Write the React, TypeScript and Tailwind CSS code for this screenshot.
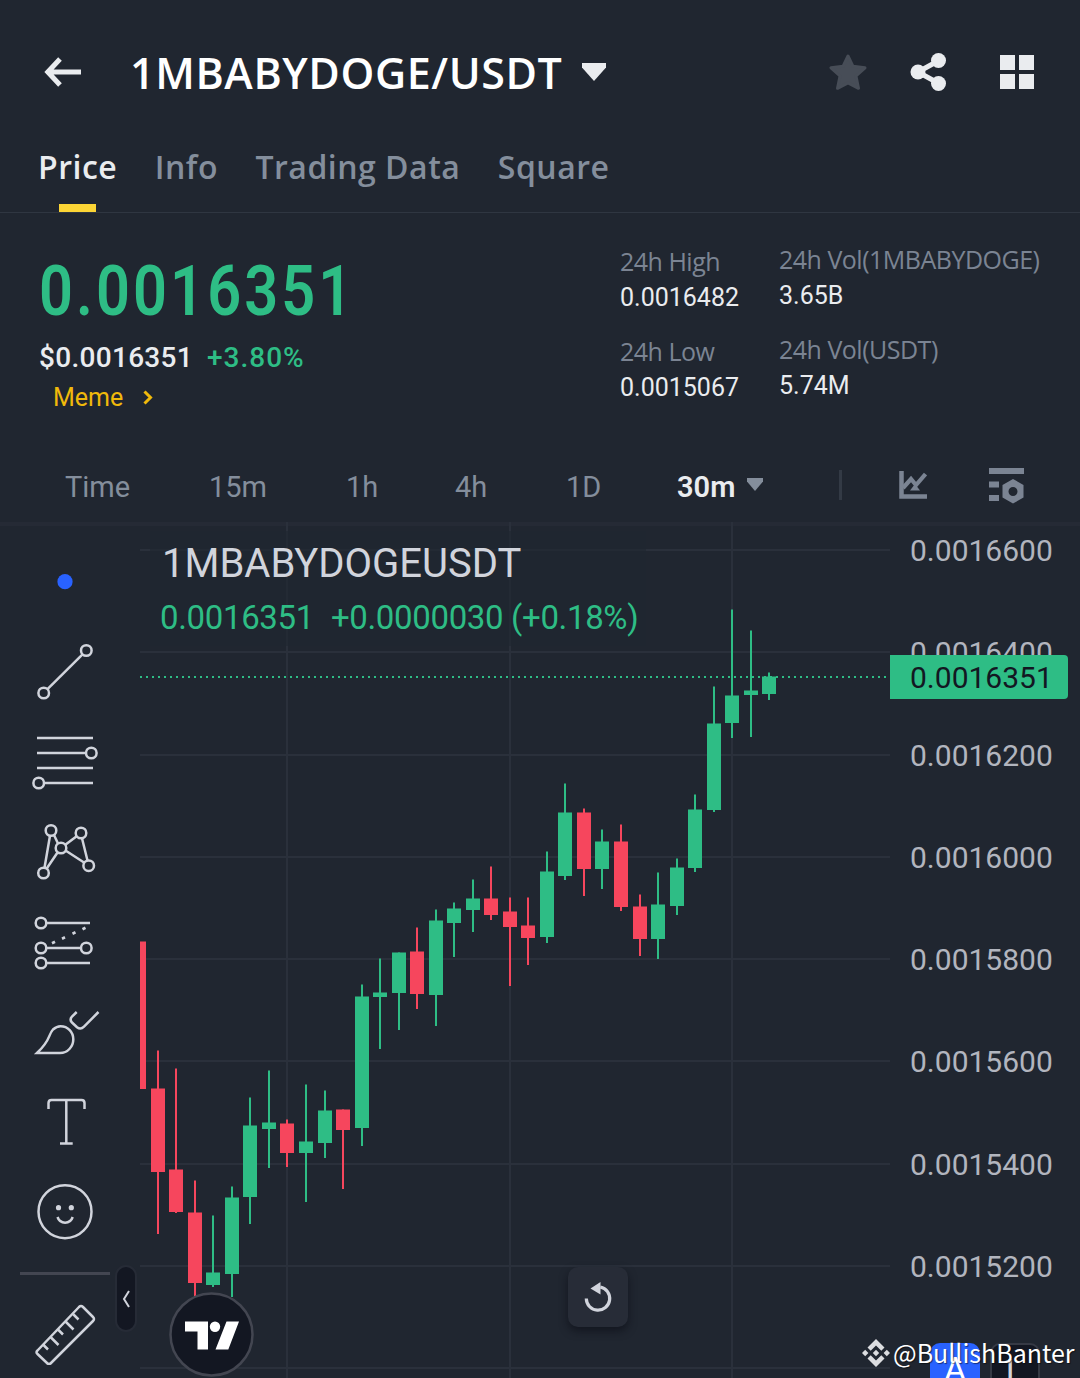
import type { ReactNode } from 'react'

const UP = '#2ebd85'
const DOWN = '#f6465d'

// [left, bodyTop, bodyBottom, wickTop, wickBottom, up], in chart pixels
type Candle = [number, number, number, number, number, boolean]

const candles: Candle[] = [
  [-8, 415.5, 563, 415.5, 563, false],
  [11, 562.5, 646, 524.5, 708, false],
  [29, 643.5, 686, 542.5, 687, false],
  [48, 686.5, 757, 654.5, 775, false],
  [66, 746.5, 759, 689.5, 761, true],
  [85, 671.5, 748, 660.5, 771, true],
  [103, 599.5, 671, 571.5, 698, true],
  [122, 596.5, 603, 544.5, 642, true],
  [140, 597.5, 627, 593.5, 641, false],
  [159, 615.5, 627, 558.5, 676, true],
  [178, 584.5, 617, 564.5, 632, true],
  [196, 583.5, 604, 583.5, 663, false],
  [215, 470.5, 602, 458.5, 620, true],
  [233, 466.5, 471, 432.5, 523, true],
  [252, 426.5, 467, 426.5, 504, true],
  [270, 425.5, 468, 401.5, 483, false],
  [289, 394.5, 469, 383.5, 500, true],
  [307, 382.5, 397, 376.5, 431, true],
  [326, 372.5, 384, 353.5, 406, true],
  [344, 372.5, 389, 340.5, 394, false],
  [363, 385.5, 401, 371.5, 460, false],
  [381, 399.5, 412, 371.5, 439, false],
  [400, 345.5, 411, 325.5, 417, true],
  [418, 286.5, 350, 257.5, 354, true],
  [437, 286.5, 343, 282.5, 370, false],
  [455, 315.5, 343, 303.5, 363, true],
  [474, 315.5, 381, 298.5, 385, false],
  [493, 380.5, 413, 368.5, 430, false],
  [511, 378.5, 413, 346.5, 433, true],
  [530, 341.5, 380, 332.5, 389, true],
  [548, 283.5, 342, 268.5, 346, true],
  [567, 197.5, 284, 160.5, 286, true],
  [585, 169.5, 197, 83.5, 212, true],
  [604, 164.5, 169, 104.5, 211, true],
  [622, 150.5, 168, 146.5, 174, true],
]

const gridY = [24, 126, 229, 331, 433, 535, 638, 740, 842]
const gridX = [147, 370, 592]

const prices = [
  '0.0016600',
  '0.0016400',
  '0.0016200',
  '0.0016000',
  '0.0015800',
  '0.0015600',
  '0.0015400',
  '0.0015200',
]

const tabs = [
  { label: 'Price', active: true },
  { label: 'Info' },
  { label: 'Trading Data' },
  { label: 'Square' },
]

const intervals = [
  { label: 'Time', width: 'w-[144px]' },
  { label: '15m', width: 'w-[137px]' },
  { label: '1h', width: 'w-[109px]' },
  { label: '4h', width: 'w-[111px]' },
  { label: '1D', width: 'w-[111px]' },
]

function Header() {
  return (
    <header className="flex h-[134px] items-center pt-2.5 pl-11 pr-[46px]">
      <svg width="38" height="30" viewBox="0 0 38 30" fill="none" stroke="#eaecef" strokeWidth="5">
        <path d="M37 15H4M16 2 3.800 15 16 28" />
      </svg>
      <h1 className="ml-[48px] w-[452px] whitespace-nowrap font-['Open_Sans',sans-serif] text-[43px] font-semibold leading-none tracking-[0.6px] text-white">
        1MBABYDOGE/USDT
      </h1>
      <svg width="24" height="18" viewBox="0 0 24 18" fill="#eaecef">
        <path d="M0 0h24v4.500L12 18 0 4.500z" />
      </svg>
      <div className="ml-auto flex items-center">
        <svg width="38" height="38" viewBox="0 0 38 38" fill="#474d57" stroke="#474d57" strokeWidth="3" strokeLinejoin="round">
          <path d="m19 3 5 10.300 12 1.500-9 8.200 2.500 12.300L19 29.900 8.500 35.300 11 23l-9-8.200 12-1.500z" />
        </svg>
        <svg className="ml-[42px] mr-px" width="38" height="38" viewBox="0 0 38 38" fill="#eaecef">
          <path d="M9 19 29 8M9 19l20 11" stroke="#eaecef" strokeWidth="5" />
          <circle cx="9" cy="19" r="7.500" />
          <circle cx="29.500" cy="7.500" r="7.500" />
          <circle cx="29.500" cy="30.500" r="7.500" />
        </svg>
        <svg className="ml-[52px]" width="34" height="34" viewBox="0 0 34 34" fill="#eaecef">
          <path d="M0 0h15v15H0zM19 0h15v15H19zM0 19h15v15H0zM19 19h15v15H19z" />
        </svg>
      </div>
    </header>
  )
}

function Tabs() {
  return (
    <nav className="flex h-[79px] gap-[37.5px] border-b border-[#2f3641] pl-[38px] font-['Open_Sans',sans-serif] text-[32px] font-semibold leading-[66px] tracking-[0.5px]">
      {tabs.map((tab) => (
        <div key={tab.label} className={tab.active ? 'relative text-[#eaecef]' : 'text-[#848e9c]'}>
          {tab.label}
          {tab.active && <span className="absolute bottom-0 left-[21px] h-2 w-[37px] bg-[#fcd535]" />}
        </div>
      ))}
    </nav>
  )
}

function Stat({ label, value }: { label: string; value: string }) {
  return (
    <div className="mb-5 whitespace-nowrap text-[25px] leading-[35px]">
      <div className="-mt-px mb-px font-['Open_Sans',sans-serif] tracking-[-0.5px] text-[#7b8493]">{label}</div>
      <div className="text-[#eaecef]">{value}</div>
    </div>
  )
}

function Summary() {
  return (
    <section className="flex h-[237px]">
      <div className="w-[620px] pl-[39px] pt-[38px]">
        <div className="origin-left scale-x-[0.85] text-[70px] font-semibold leading-[80px] tracking-[3.600px] text-[#2ebd85]">
          0.0016351
        </div>
        <div className="mt-[9px] flex gap-[14px] text-[28px] font-medium leading-9">
          <span className="tracking-[0.3px] text-[#eaecef]">$0.0016351</span>
          <span className="tracking-[1px] text-[#2ebd85]">+3.80%</span>
        </div>
        <div className="mt-1 flex items-center pl-[14px] text-[25px] leading-9 text-[#f0b90b]">
          Meme
          <svg className="-mt-0.5 ml-5" width="10" height="15" viewBox="0 0 10 15" fill="none" stroke="#f0b90b" strokeWidth="3">
            <path d="m1.500 1.500 6 6-6 6" />
          </svg>
        </div>
      </div>
      <div className="w-[159px] pt-8">
        <Stat label="24h High" value="0.0016482" />
        <Stat label="24h Low" value="0.0015067" />
      </div>
      <div className="pt-[30px]">
        <Stat label="24h Vol(1MBABYDOGE)" value="3.65B" />
        <Stat label="24h Vol(USDT)" value="5.74M" />
      </div>
    </section>
  )
}

function IntervalBar() {
  return (
    <div className="flex h-[76px] items-center border-b-4 border-[#252a35] pl-[65px] text-[29px] text-[#848e9c]">
      {intervals.map((item) => (
        <span key={item.label} className={`pt-[3px] ${item.width}`}>
          {item.label}
        </span>
      ))}
      <span className="w-[70px] pt-[3px] font-semibold text-[#eaecef]">30m</span>
      <svg className="-mt-1" width="16" height="13" viewBox="0 0 16 13" fill="#848e9c">
        <path d="M0 0h16v3.500L8 13 0 3.500z" />
      </svg>
      <span className="ml-[76px] -mt-0.5 h-[30px] w-[3px] bg-[#333a45]" />
      <svg className="ml-[57px] -mt-[3px]" width="28" height="28" viewBox="0 0 28 28" fill="none" stroke="#7b8493" strokeWidth="4.500">
        <path d="M2.500 0v25.500H28" />
        <path d="m4 17 8-9 5 6L26.500 3" strokeWidth="4.200" />
        <path d="m16 13 5 6.500H11z" fill="#7b8493" stroke="none" />
      </svg>
      <svg className="ml-[62px]" width="36" height="38" viewBox="0 0 36 38" fill="#7b8493">
        <path d="M0 1h35v6H0zM0 14.500h10v6H0zM0 28h10v6H0z" />
        <path fillRule="evenodd" d="m24 12 10.500 6v12.500L24 36.500l-10.500-6V18zM24 20a4.500 4.500 0 1 0 0 9 4.500 4.500 0 0 0 0-9z" />
      </svg>
    </div>
  )
}

function Tool({ children }: { children: ReactNode }) {
  return (
    <svg className="shrink-0" width="130" height="90" viewBox="0 0 130 90" fill="none" stroke="#d1d4dc" strokeWidth="2.500">
      {children}
    </svg>
  )
}

function Toolbar() {
  return (
    <aside className="flex w-[140px] shrink-0 flex-col pt-[11px]">
      <Tool>
        <circle cx="65" cy="44.700" r="7.600" fill="#2962ff" stroke="none" />
      </Tool>
      {/* trend line */}
      <Tool>
        <circle cx="43.700" cy="66" r="5.300" />
        <circle cx="86.300" cy="23.500" r="5.300" />
        <path d="m47.500 62.200 35-34.900" />
      </Tool>
      {/* fib retracement */}
      <Tool>
        <path d="M37 21h56M37 36h49M37 51h56M44 66h49" />
        <circle cx="91.300" cy="36" r="5.300" />
        <circle cx="38.700" cy="66" r="5.300" />
      </Tool>
      {/* pattern */}
      <Tool>
        <circle cx="51" cy="23.500" r="5.300" />
        <circle cx="81" cy="26" r="5.300" />
        <circle cx="61" cy="41" r="5.300" />
        <circle cx="43.500" cy="66" r="5.300" />
        <circle cx="88.700" cy="58.700" r="5.300" />
        <path d="m50 28.800-5.500 32M54 28l4 8.500M65 38l12-9M65.500 43.500l18.500 12M57.700 45.300 46.700 61.500M82 31.200l5.500 22.300" />
      </Tool>
      {/* forecast */}
      <Tool>
        <circle cx="41" cy="26" r="5.300" />
        <circle cx="41" cy="51" r="5.300" />
        <circle cx="86.300" cy="51" r="5.300" />
        <circle cx="41" cy="66" r="5.300" />
        <path d="M46.500 26H90M46.500 51H81M46.500 66H90" />
        <path d="m52 46.200 3-1.400M62 41.700l3-1.400M72.500 36.700l3-1.400M82.500 32.200l3-1.400" strokeWidth="2.800" />
      </Tool>
      {/* brush */}
      <Tool>
        <path d="M37 66C51 53 48 48 53 42.500 56 39.800 58 39.200 60.500 39.200c7.500 0 12.800 6 12.800 13S68 66 60 66z" />
        <path d="M76.700 25 72 29.500c-1.700 2-1.500 4.500 0 6l5 4.700c2.500 2 5 1.500 7-.5L98.500 25" />
      </Tool>
      {/* text */}
      <Tool>
        <path d="M48.500 32v-6q0-3 3-3h30q3 0 3 3v6M66.300 23v43.500M60 66.500h12.700" />
      </Tool>
      {/* icons */}
      <Tool>
        <circle cx="65" cy="44.700" r="26.500" />
        <circle cx="58.500" cy="40.700" r="2.600" fill="#d1d4dc" stroke="none" />
        <circle cx="71.300" cy="40.700" r="2.600" fill="#d1d4dc" stroke="none" />
        <path d="M57.500 50c2.500 7.500 12.700 7.500 15.200 0" />
      </Tool>
      <div className="ml-5 mt-[15px] h-[3px] w-[90px] shrink-0 bg-[#434651]" />
      {/* measure */}
      <Tool>
        <path
          strokeLinejoin="round"
          d="M37.500 75.500 79 32q2-2 4 0l10 10q2 2 0 4L51 88q-2 2-4 0L37.500 79q-2-1.700 0-3.500zM43 69.500l5 5M50.500 62l8 8M58 54.500l5 5M65.500 46.500l8 8M73.500 39.500l5 5"
        />
      </Tool>
    </aside>
  )
}

function Plot() {
  return (
    <svg className="shrink-0 overflow-visible" width="750" height="852" viewBox="0 0 750 852" shapeRendering="crispEdges">
      {gridY.map((y) => (
        <rect key={y} x="0" y={y - 1} width="750" height="2" fill="#2a303b" />
      ))}
      {gridX.map((x) => (
        <rect key={x} x={x - 1} y="-4" width="2" height="860" fill="#2a303b" />
      ))}
      <path d="M0 151h750" stroke={UP} strokeWidth="2" strokeDasharray="2 4" />
      {/* the first candle is cut by the left edge of the plot */}
      <svg width="750" height="852">
        {candles.map(([x, top, bottom, high, low, up]) => (
          <g key={x} fill={up ? UP : DOWN} shapeRendering="auto">
            <rect x={x} y={top} width="14" height={bottom - top} />
            <rect x={x + 6} y={high} width="2" height={low - high} />
          </g>
        ))}
      </svg>
    </svg>
  )
}

function TradingViewBadge() {
  return (
    <svg className="absolute left-[169px] top-[766px]" width="85" height="85" viewBox="0 0 85 85">
      <circle cx="42.500" cy="42.500" r="41" fill="#131722" stroke="#434651" strokeWidth="2.500" />
      <path d="M16 29.500h23v28H28.500v-18H16zM57.500 29.500H70l-10.700 28H46.500z" fill="#fff" />
      <circle cx="46" cy="34.700" r="5.200" fill="#fff" />
    </svg>
  )
}

function Chart() {
  return (
    <main className="relative flex h-[852px]">
      <Toolbar />
      <Plot />
      <div className="-mt-[26px] pl-5">
        {prices.map((price) => (
          <div key={price} className="h-[102.25px] text-[30px] leading-[102.25px] text-[#b2b5be]">
            {price}
          </div>
        ))}
      </div>

      {/* Legend */}
      <div className="absolute left-[150px] top-[5px] h-[115px] w-[496px] bg-[#202630]/60 pl-[11px]">
        <div className="mt-[9px] pl-px text-[40px] leading-[48px] text-[#d1d4dc]">1MBABYDOGEUSDT</div>
        <div className="mt-[5px] flex gap-[17px] whitespace-nowrap text-[33px] leading-[50px] tracking-[-0.35px] text-[#2ebd85]">
          <span className="-ml-px">0.0016351</span>
          <span>+0.0000030 (+0.18%)</span>
        </div>
      </div>

      {/* Last price */}
      <div className="absolute left-[890px] top-[129px] h-11 w-[178px] rounded-r bg-[#2ebd85] pl-5 text-[30px] leading-[45px] text-[#131722]">
        0.0016351
      </div>

      <button className="absolute left-[115px] top-[739px] flex h-[67px] w-[22px] items-center justify-center rounded-[11px] border-2 border-[#262b36] bg-[#131722]">
        <svg width="8" height="18" viewBox="0 0 8 18" fill="none" stroke="#d1d4dc" strokeWidth="2">
          <path d="M7 1 2 9l5 8" />
        </svg>
      </button>

      <TradingViewBadge />

      <button className="absolute left-[568px] top-[741px] flex h-[60px] w-[60px] items-center justify-center rounded-[10px] bg-[#272c37] shadow-[0_4px_8px_rgba(10,12,20,0.6)]">
        <svg width="28" height="32" viewBox="0 0 28 32" fill="none" stroke="#d1d4dc" strokeWidth="3.200">
          <path d="M2.300 17.500a11.700 11.700 0 1 0 14-11.500" />
          <path d="m6.500 7.500 10-6.500v12.500z" fill="#d1d4dc" stroke="none" />
        </svg>
      </button>

      <div className="absolute left-[930px] top-[817px] flex gap-2.5 text-center text-[34px] leading-[52px]">
        <button className="h-[51px] w-[50px] rounded-[10px] bg-[#2962ff] text-white">A</button>
        <button className="h-[51px] w-[50px] rounded-[10px] border-2 border-[#363a45] bg-[#131722] text-[#d1d4dc]">L</button>
      </div>

      {/* Author */}
      <div className="absolute left-[862px] top-[810px] flex items-center gap-[3px] whitespace-nowrap font-['Noto_Sans_CJK_SC',sans-serif] text-[25px] leading-9 text-white [text-shadow:1px_1px_1px_rgba(0,0,0,0.5)]">
        <svg width="28" height="28" viewBox="0 0 28 28" fill="#dcdde0">
          <path d="m14 0 8.500 8.500-3.200 3.200L14 6.400l-5.300 5.300-3.200-3.200zM14 28l8.500-8.500-3.200-3.200-5.300 5.300-5.300-5.300-3.200 3.200zM3.200 10.800 6.400 14l-3.200 3.200L0 14zM24.800 10.800 28 14l-3.200 3.200-3.200-3.200zM14 10.800l3.200 3.200-3.200 3.200-3.200-3.200z" />
        </svg>
        <span className="-mt-0.5">@BullishBanter</span>
      </div>
    </main>
  )
}

export default function App() {
  return (
    <div className="h-[1378px] w-[1080px] overflow-hidden bg-[#202630] font-['Roboto',sans-serif]">
      <Header />
      <Tabs />
      <Summary />
      <IntervalBar />
      <Chart />
    </div>
  )
}
